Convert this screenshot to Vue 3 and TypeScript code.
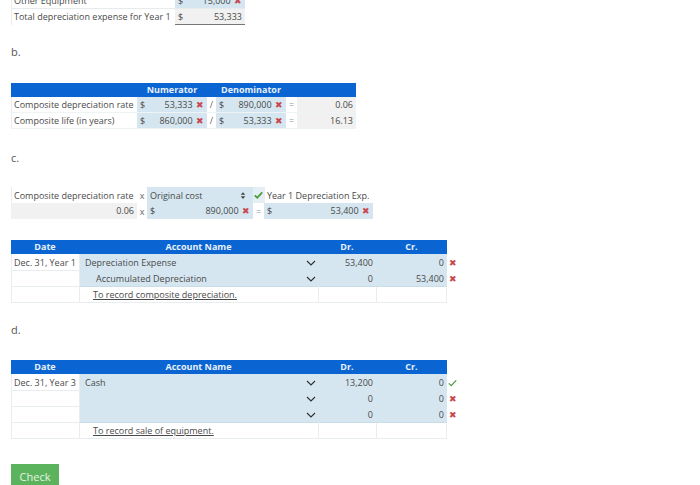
<script setup lang="ts">
interface JournalRow {
  date: string
  account: string
  indent?: boolean
  dr: string
  cr: string
  mark: 'x' | 'ok'
}

const firstJournal: JournalRow[] = [
  { date: 'Dec. 31, Year 1', account: 'Depreciation Expense', dr: '53,400', cr: '0', mark: 'x' },
  { date: '', account: 'Accumulated Depreciation', indent: true, dr: '0', cr: '53,400', mark: 'x' },
]

const secondJournal: JournalRow[] = [
  { date: 'Dec. 31, Year 3', account: 'Cash', dr: '13,200', cr: '0', mark: 'ok' },
  { date: '', account: '', dr: '0', cr: '0', mark: 'x' },
  { date: '', account: '', dr: '0', cr: '0', mark: 'x' },
]

const journals = [
  { rows: firstJournal, memo: 'To record composite depreciation.', cls: 'j1' },
  { rows: secondJournal, memo: 'To record sale of equipment.', cls: 'j2' },
]

const ratios = [
  { label: 'Composite depreciation rate', num: '53,333', den: '890,000', res: '0.06' },
  { label: 'Composite life (in years)', num: '860,000', den: '53,333', res: '16.13' },
]
</script>

<template>
  <main class="page">
    <section class="top">
      <div class="top-row clipped">
        <span class="cell label">Other Equipment</span>
        <span class="cell blue money"><span>$</span><span>15,000 <i class="x">✖</i></span></span>
      </div>
      <div class="top-row total">
        <span class="cell label">Total depreciation expense for Year 1</span>
        <span class="cell gray money"><span>$</span><span>53,333</span></span>
      </div>
    </section>

    <p class="letter lb">b.</p>

    <section class="ratio">
      <div class="head r-head">
        <span></span><span class="c">Numerator</span><span></span><span class="c">Denominator</span><span></span><span></span>
      </div>
      <div v-for="r in ratios" :key="r.label" class="r-row">
        <span class="cell label">{{ r.label }}</span>
        <span class="cell blue money"><span>$</span><span>{{ r.num }} <i class="x">✖</i></span></span>
        <span class="op">/</span>
        <span class="cell blue money"><span>$</span><span>{{ r.den }} <i class="x">✖</i></span></span>
        <span class="op light">=</span>
        <span class="cell gray right">{{ r.res }}</span>
      </div>
    </section>

    <p class="letter lc">c.</p>

    <section class="calc">
      <div class="c-row first">
        <span class="cell label">Composite depreciation rate</span>
        <span class="op">x</span>
        <span class="cell blue select">Original cost<svg class="updown" viewBox="0 0 8 10"><path d="M4 0.5 7 4H1zM4 9.5 1 6h6z" fill="#444" /></svg></span>
        <span class="op tint"><svg class="check" viewBox="0 0 12 10"><path d="M1 5.5 4.3 8.5 11 1.5" fill="none" stroke="#4a9e3f" stroke-width="2.4" /></svg></span>
        <span class="cell label">Year 1 Depreciation Exp.</span>
      </div>
      <div class="c-row">
        <span class="cell gray right">0.06</span>
        <span class="op">x</span>
        <span class="cell blue money"><span>$</span><span>890,000 <i class="x">✖</i></span></span>
        <span class="op light">=</span>
        <span class="cell blue money"><span>$</span><span>53,400 <i class="x">✖</i></span></span>
      </div>
    </section>

    <template v-for="(j, idx) in journals" :key="j.cls">
      <p v-if="idx === 1" class="letter ld">d.</p>
      <section class="journal" :class="j.cls">
        <div class="head j-row j-head">
          <span class="c">Date</span><span class="c">Account Name</span><span class="c">Dr.</span><span class="c">Cr.</span>
        </div>
        <div v-for="(r, i) in j.rows" :key="i" class="j-row body-row">
          <span class="cell date">{{ r.date }}</span>
          <span class="cell blue account" :class="{ indent: r.indent }">
            <span>{{ r.account }}</span>
            <svg class="chev" viewBox="0 0 10 6"><path d="M1 1 5 5 9 1" fill="none" stroke="#333" stroke-width="1.2" /></svg>
          </span>
          <span class="cell blue right">{{ r.dr }}</span>
          <span class="cell blue right cr">
            {{ r.cr }}
            <i v-if="r.mark === 'x'" class="x outside">✖</i>
            <svg v-else class="check outside" viewBox="0 0 12 10"><path d="M1 5.5 4.3 8.5 11 1.5" fill="none" stroke="#4a9e3f" stroke-width="1.7" /></svg>
          </span>
        </div>
        <div class="j-row body-row memo-row">
          <span class="cell date"></span>
          <span class="cell memo">{{ j.memo }}</span>
          <span class="cell"></span>
          <span class="cell"></span>
        </div>
      </section>
    </template>

    <button class="check-btn" type="button">Check</button>
  </main>
</template>

<style>
html, body { margin: 0; background: #fff; overflow: hidden; }
</style>

<style scoped>
.page {
  width: 700px;
  height: 485px;
  overflow: hidden;
  box-sizing: border-box;
  padding-left: 11px;
  font-family: "Open Sans", "Liberation Sans", sans-serif;
  font-size: 9px;
  line-height: 15px;
  color: #4a4a4a;
}
.top { margin-top: -7px; width: 234px; }
.top-row { display: grid; grid-template-columns: 164px 70px; height: 16px; }
.clipped .cell { border-bottom: 1px solid #e6ebee; }
.cell {
  box-sizing: border-box;
  padding: 0 3px;
  min-width: 0;
  white-space: nowrap;
  display: block;
}
.label { border-left: 1px solid #ececec; padding-left: 2px; }
.blue { background: #d5e6f0; }
.gray { background: #f1f1f1; }
.total .gray { border-bottom: 1px solid #777; }
.money { display: flex; justify-content: space-between; }
.right { text-align: right; }
.c { text-align: center; }
.x { font-style: normal; color: #c8474f; font-size: 9px; margin-left: 1px; }
.op { display: flex; align-items: center; justify-content: center; color: #666; }
.op.light { color: #8a9aa3; }
.op.tint { background: #e4eff5; }
.letter { margin: 0; font-size: 11px; line-height: 14px; color: #555; }
.lb { margin-top: 20px; }
.lc { margin-top: 22px; }
.ld { margin-top: 21px; }
.head { background: #0a64d2; color: #e8f1fb; font-weight: 700; height: 14px; line-height: 14px; }
.ratio { margin-top: 24px; width: 345px; }
.r-head, .r-row { display: grid; grid-template-columns: 126px 70px 9px 70px 11px 59px; }
.r-row { height: 16px; border-bottom: 1px solid #eef3f6; box-sizing: border-box; }
.calc { margin-top: 22px; width: 362px; }
.c-row { display: grid; grid-template-columns: 126px 10px 106px 11px 109px; height: 16px; }
.first .cell { padding-top: 1px; }
.select { display: flex; align-items: center; justify-content: space-between; }
.updown { width: 6px; height: 9px; margin-right: 4px; }
.check { width: 9px; height: 8px; }
.journal { width: 436px; }
.j1 { margin-top: 21px; }
.j2 { margin-top: 23px; }
.j-row { display: grid; grid-template-columns: 68px 239px 58px 71px; }
.body-row { height: 16px; }
.body-row .cell { border-bottom: 1px solid #e8edf0; padding-top: 1px; }
.body-row .blue { border-bottom-color: #c9dde8; }
.date { border-left: 1px solid #ececec; padding-left: 2px; }
.account { display: flex; justify-content: space-between; align-items: center; padding-left: 5px; border-left: 1px solid #ececec; }
.account.indent { padding-left: 16px; }
.chev { width: 10px; height: 6px; margin-right: -1px; flex: none; }
.cr { position: relative; }
.outside { position: absolute; left: 73px; top: 1px; margin: 0; }
svg.outside { top: 5px; left: 72px; }
.memo { padding-left: 13px; text-decoration: underline; border-left: 1px solid #ececec; }
.memo-row .cell + .cell + .cell { border-left: 1px solid #ececec; }
.memo-row .cell:last-child { border-right: 1px solid #ececec; }
.check-btn {
  display: block;
  margin-top: 26px;
  width: 48px;
  height: 24px;
  padding: 0;
  border: 0;
  background: #5cb35d;
  color: #e4f3e4;
  font: 11px "Open Sans", "Liberation Sans", sans-serif;
}
</style>
